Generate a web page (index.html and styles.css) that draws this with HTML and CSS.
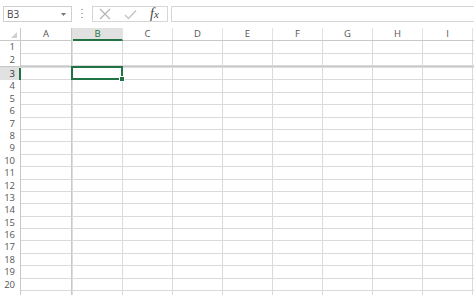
FILE: index.html
```html
<!DOCTYPE html>
<html lang="en">
<head>
  <meta charset="UTF-8">
  <title>Book1 - Excel</title>
  <link rel="stylesheet" href="styles.css">
</head>
<body>
  <div class="toolbar">
    <div class="namebox">
      <span>B3</span>
      <svg class="caret" width="5" height="3" viewBox="0 0 5 3"><path d="M0 0H5L2.5 3Z" fill="#777"/></svg>
    </div>
    <div class="grip"></div>
    <div class="fbtns">
      <svg width="12" height="12" viewBox="0 0 12 12"><path d="M1 1L11 11M11 1L1 11" stroke="#b4b4b4" stroke-width="1.2" fill="none"/></svg>
      <svg width="13" height="11" viewBox="0 0 13 11"><path d="M1 6L4.5 9.5L12 1.5" stroke="#c4c4c4" stroke-width="1.4" fill="none"/></svg>
      <span class="fx">f<span>x</span></span>
    </div>
    <div class="fbar"></div>
  </div>

  <div class="sheet">
    <div class="row hdr">
      <div class="rh corner"></div>
      <div class="ca ch">A</div>
      <div class="fz"></div>
      <div class="rest">
        <div class="ch sel">B</div>
        <div class="ch">C</div>
        <div class="ch">D</div>
        <div class="ch">E</div>
        <div class="ch">F</div>
        <div class="ch">G</div>
        <div class="ch">H</div>
        <div class="ch">I</div>
      </div>
    </div>

    <div class="row top"><div class="rh">1</div><div class="ca"></div><div class="fz"></div><div class="rest"></div></div>
    <div class="row top"><div class="rh">2</div><div class="ca"></div><div class="fz"></div><div class="rest"></div></div>

    <div class="hfz"></div>

    <div class="row"><div class="rh sel">3</div><div class="ca"></div><div class="fz"></div><div class="rest"><div class="active"></div></div></div>
    <div class="row"><div class="rh">4</div><div class="ca"></div><div class="fz"></div><div class="rest"></div></div>
    <div class="row"><div class="rh">5</div><div class="ca"></div><div class="fz"></div><div class="rest"></div></div>
    <div class="row"><div class="rh">6</div><div class="ca"></div><div class="fz"></div><div class="rest"></div></div>
    <div class="row"><div class="rh">7</div><div class="ca"></div><div class="fz"></div><div class="rest"></div></div>
    <div class="row"><div class="rh">8</div><div class="ca"></div><div class="fz"></div><div class="rest"></div></div>
    <div class="row"><div class="rh">9</div><div class="ca"></div><div class="fz"></div><div class="rest"></div></div>
    <div class="row"><div class="rh">10</div><div class="ca"></div><div class="fz"></div><div class="rest"></div></div>
    <div class="row"><div class="rh">11</div><div class="ca"></div><div class="fz"></div><div class="rest"></div></div>
    <div class="row"><div class="rh">12</div><div class="ca"></div><div class="fz"></div><div class="rest"></div></div>
    <div class="row"><div class="rh">13</div><div class="ca"></div><div class="fz"></div><div class="rest"></div></div>
    <div class="row"><div class="rh">14</div><div class="ca"></div><div class="fz"></div><div class="rest"></div></div>
    <div class="row"><div class="rh">15</div><div class="ca"></div><div class="fz"></div><div class="rest"></div></div>
    <div class="row"><div class="rh">16</div><div class="ca"></div><div class="fz"></div><div class="rest"></div></div>
    <div class="row"><div class="rh">17</div><div class="ca"></div><div class="fz"></div><div class="rest"></div></div>
    <div class="row"><div class="rh">18</div><div class="ca"></div><div class="fz"></div><div class="rest"></div></div>
    <div class="row"><div class="rh">19</div><div class="ca"></div><div class="fz"></div><div class="rest"></div></div>
    <div class="row"><div class="rh">20</div><div class="ca"></div><div class="fz"></div><div class="rest"></div></div>
    <div class="row"><div class="rh"></div><div class="ca"></div><div class="fz"></div><div class="rest"></div></div>
  </div>
</body>
</html>
```

FILE: styles.css
```css
:root {
  --grid: #dadada;
  --hdr-line: #c8c8c8;
  --freeze: #c8c8c8;
  --green: #217346;
  --hdr-text: #555;
}

html, body {
  margin: 0;
  padding: 0;
  height: 100%;
  overflow: hidden;
  background: #fff;
  font-family: 'Open Sans', 'DejaVu Sans', sans-serif;
}

/* formula bar area */
.toolbar {
  height: 28px;
  display: flex;
  align-items: flex-start;
  padding-top: 6px;
  box-sizing: border-box;
}

.namebox {
  width: 69px;
  height: 16px;
  margin-left: 3px;
  box-sizing: border-box;
  border: 1px solid #cfcfcf;
  display: flex;
  align-items: center;
  justify-content: space-between;
  padding: 0 5px 0 3px;
  font-size: 10px;
  color: #444;
}

.grip {
  width: 2px;
  height: 10px;
  margin: 3px 9px 0 9px;
  background: repeating-linear-gradient(to bottom, #b0b0b0 0 1px, transparent 1px 4px);
}

.fbtns {
  width: 76px;
  height: 16px;
  box-sizing: border-box;
  border: 1px solid #d6d6d6;
  display: flex;
  align-items: center;
  padding: 0 6px 0 6px;
  gap: 13px;
}

.fx {
  font-family: 'Liberation Serif', 'DejaVu Serif', serif;
  font-style: italic;
  font-size: 14px;
  color: #444;
  line-height: 1;
}

.fx span {
  font-size: 11px;
}

.fbar {
  flex: 1;
  height: 16px;
  margin-left: 3px;
  box-sizing: border-box;
  border: 1px solid #d6d6d6;
  border-right: none;
}

/* grid */
.sheet {
  display: flex;
  flex-direction: column;
}

.row {
  display: flex;
  height: 12.4px;
  flex: none;
}

.row.top {
  height: 12.5px;
}

.row.hdr {
  height: 13px;
}

.rh {
  width: 21px;
  flex: none;
  box-sizing: border-box;
  border-right: 1px solid var(--hdr-line);
  padding-right: 5px;
  text-align: right;
  font-size: 9.5px;
  line-height: 12px;
  color: var(--hdr-text);
}

.rh.sel {
  background: #e1e1e1;
  border-right: 2px solid var(--green);
  color: #333;
  padding-right: 4px;
}

.ca {
  width: 50px;
  flex: none;
  box-sizing: border-box;
  border-bottom: 1px solid var(--grid);
}

/* frozen pane split: two thin lines */
.fz {
  width: 2px;
  flex: none;
  background: linear-gradient(to right, var(--freeze) 1px, #dedede 1px);
}

.rest {
  flex: 1;
  box-sizing: border-box;
  border-bottom: 1px solid var(--grid);
  background-image: linear-gradient(to right, transparent 49px, var(--grid) 49px);
  background-size: 50px 100%;
  display: flex;
}

.hfz {
  height: 2px;
  flex: none;
  background: linear-gradient(to bottom, var(--freeze) 1px, #dedede 1px);
}

/* column headers */
.hdr .rh,
.hdr .ca,
.hdr .rest {
  border-bottom: 1px solid var(--hdr-line);
}

.hdr .rest {
  background: none;
}

.corner {
  position: relative;
}

.corner::after {
  content: "";
  position: absolute;
  right: 3px;
  bottom: 2px;
  border-style: solid;
  border-width: 0 0 6px 6px;
  border-color: transparent transparent #d0d0d0 transparent;
}

.ch {
  width: 50px;
  flex: none;
  box-sizing: border-box;
  text-align: center;
  font-size: 9.5px;
  line-height: 12px;
  color: var(--hdr-text);
}

.rest .ch {
  border-right: 1px solid #e2e2e2;
}

.ch.sel {
  background: #e1e1e1;
  color: var(--green);
  border-bottom: 2px solid var(--green);
  margin-bottom: -1px;
  line-height: 11px;
}

/* active cell B3 */
.active {
  width: 50px;
  height: 100%;
  position: relative;
}

.active::before {
  content: "";
  position: absolute;
  left: -2px;
  top: -2px;
  right: 0;
  bottom: -1px;
  border: 2px solid var(--green);
}

.active::after {
  content: "";
  position: absolute;
  right: -2px;
  bottom: -3px;
  width: 4px;
  height: 4px;
  background: var(--green);
  border: 1px solid #fff;
}
```
